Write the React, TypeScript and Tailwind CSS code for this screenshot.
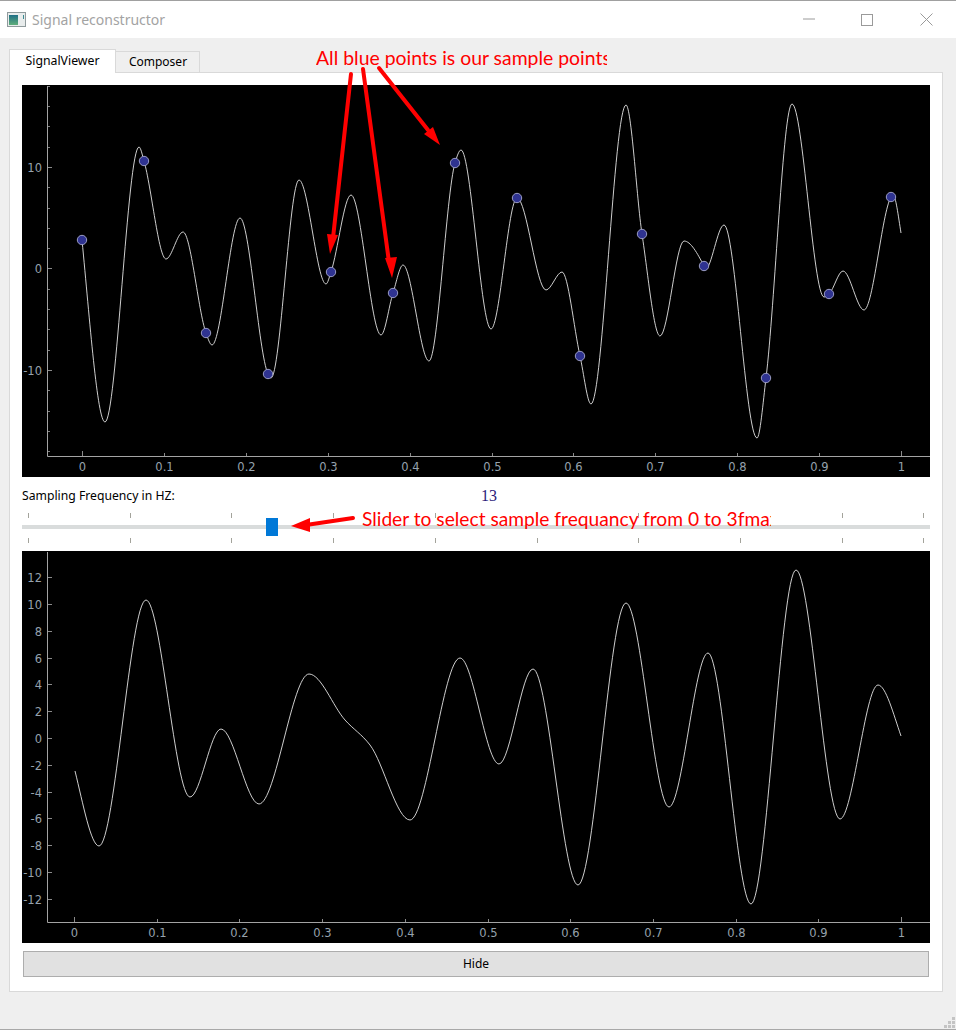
import React from 'react';

type Pt = [number, number];

// knots are page pixels: extrema and the sample dots
const topKnots: Pt[] = [
  [82, 240], [105, 422], [139, 147], [144, 161], [166, 259], [183, 232], [206, 333], [212, 345], [240, 218],
  [268, 374], [271, 378], [299, 180], [326, 284], [331, 272], [351, 195], [381, 335], [393, 293], [403, 265], [429, 361],
  [455, 163], [461, 150], [491, 329], [517, 198], [546, 290], [562, 272], [580, 356], [591, 404], [626, 105], [642, 234],
  [660, 336], [684, 241], [704, 266], [705, 270], [724, 225], [757, 438], [766, 378], [792, 104], [824, 297], [829, 294], [843, 271],
  [864, 310], [891, 197], [893, 195], [901, 233],
];

const bottomKnots: Pt[] = [
  [75, 771], [99, 846], [146, 600], [190, 797], [221, 729], [259, 804], [309, 674], [345, 720], [370, 745], [410, 820],
  [460, 658], [499, 764], [533, 669], [578, 885], [626, 603], [669, 807], [708, 653], [751, 904], [796, 570], [840, 819],
  [878, 685], [901, 736],
];

const samples: Pt[] = [
  [82, 240], [144, 161], [206, 333], [268, 374], [331, 272], [393, 293], [455, 163], [517, 198], [580, 356], [642, 234],
  [704, 266], [766, 378], [829, 294], [891, 197],
];

function curvePath(pts: Pt[]) {
  const slope = pts.map((p, i) => {
    if (i === 0 || i === pts.length - 1) {
      const a = pts[i === 0 ? 0 : i - 1];
      const b = pts[i === 0 ? 1 : i];
      return ((b[1] - a[1]) / (b[0] - a[0])) * 1.3;
    }
    const d0 = (p[1] - pts[i - 1][1]) / (p[0] - pts[i - 1][0]);
    const d1 = (pts[i + 1][1] - p[1]) / (pts[i + 1][0] - p[0]);
    if (d0 * d1 <= 0) return 0;
    return (2 * d0 * d1) / (d0 + d1);
  });
  let d = `M${pts[0][0]} ${pts[0][1]}`;
  for (let i = 1; i < pts.length; i++) {
    const [x0, y0] = pts[i - 1];
    const [x1, y1] = pts[i];
    const h = (x1 - x0) / 3;
    d += `C${x0 + h} ${y0 + slope[i - 1] * h} ${x1 - h} ${y1 - slope[i] * h} ${x1} ${y1}`;
  }
  return d;
}

const axisFont = { fontFamily: '"DejaVu Sans", sans-serif' };

function Plot({
  top,
  axisY,
  x0,
  xStep,
  yTicks,
  minorYs,
  knots,
  dots,
}: {
  top: number;
  axisY: number;
  x0: number;
  xStep: number;
  yTicks: { y: number; label: string }[];
  minorYs: number[];
  knots: Pt[];
  dots?: Pt[];
}) {
  const xLabels = ['0', '0.1', '0.2', '0.3', '0.4', '0.5', '0.6', '0.7', '0.8', '0.9', '1'];
  return (
    <svg viewBox={`22 ${top} 908 392`} className="block h-[392px] w-[908px] bg-black">
      <path d={`M47.5 ${top + 1}V${axisY + 0.5}H930`} stroke="#a3a3a3" fill="none" />
      {minorYs.map((y) => (
        <path key={y} d={`M48 ${y + 0.5}h2`} stroke="#7d7d7d" />
      ))}
      {yTicks.map((t) => (
        <g key={t.label}>
          <path d={`M48 ${t.y + 0.5}h4`} stroke="#8a8a8a" />
          <text x={42} y={t.y + 4.5} textAnchor="end" fontSize={11.5} fill="#96a2ad" style={axisFont}>
            {t.label}
          </text>
        </g>
      ))}
      {xLabels.map((label, i) => {
        const x = Math.round(x0 + xStep * i) + 0.5;
        const major = i === 0 || i === 10;
        return (
          <g key={label}>
            <path d={`M${x} ${axisY}v${major ? -5 : -3}`} stroke="#8a8a8a" />
            <text x={x} y={axisY + 15} textAnchor="middle" fontSize={11.5} fill="#96a2ad" style={axisFont}>
              {label}
            </text>
          </g>
        );
      })}
      <path d={curvePath(knots)} fill="none" stroke="#e4e4e4" strokeWidth={0.9} />
      {dots?.map(([x, y]) => (
        <circle key={x} cx={x} cy={y} r={4.7} fill="#2f3391" stroke="#9a9cc4" strokeWidth={1} />
      ))}
    </svg>
  );
}

function Arrow({ d, head }: { d: string; head: string }) {
  return (
    <>
      <path d={d} fill="none" stroke="#ff0000" strokeWidth={4} strokeLinecap="round" />
      <polygon points={head} fill="#ff0000" />
    </>
  );
}

const sliderTicks = [28, 130, 231, 333, 435, 537, 638, 740, 842, 923];

function SliderTicks() {
  return (
    <div className="relative h-[5px] w-full">
      {sliderTicks.map((x) => (
        <div key={x} className="absolute top-0 h-[5px] w-px bg-[#a3a39b]" style={{ left: x - 22 }} />
      ))}
    </div>
  );
}

const topMinor = [-4, -3, -2, -1, 1, 2, 3, 4, 6, 7, 8, 9, 11, 12, 13, 14].map((n) => Math.round(167 + n * 20.3));

export default function App() {
  return (
    <div
      className="relative flex h-[1030px] w-[956px] flex-col overflow-hidden border-t border-b border-t-[#a0a0a0] border-b-[#a8a8a8] bg-[#efefef] text-[12px] text-black"
      style={{ fontFamily: '"Noto Sans", sans-serif' }}
    >
      {/* title bar */}
      <div className="flex h-[37px] shrink-0 items-center bg-white pl-[7px]">
        <svg width="20" height="16" viewBox="0 0 20 16" className="mr-[5px]">
          <defs>
            <linearGradient id="ico" x1="0" y1="0" x2="0" y2="1">
              <stop offset="0" stopColor="#1f6f86" />
              <stop offset="1" stopColor="#5fae7a" />
            </linearGradient>
          </defs>
          <rect x="0.5" y="0.5" width="18" height="14" fill="#e8ecec" stroke="#8f9a9c" />
          <rect x="2" y="3" width="9" height="10" fill="url(#ico)" />
          <rect x="16" y="3" width="1" height="4" fill="#3b8a90" />
        </svg>
        <span className="text-[14px] text-[#a3a3a3]">Signal reconstructor</span>
        <div className="ml-auto flex items-center pr-[23px]">
          <svg width="12" height="2" viewBox="0 0 12 2" className="mb-[2px] mr-[46px]">
            <path d="M0 1h12" stroke="#9a9a9a" />
          </svg>
          <svg width="12" height="12" viewBox="0 0 12 12" className="mr-[47px]">
            <rect x="0.5" y="0.5" width="11" height="11" fill="none" stroke="#9a9a9a" />
          </svg>
          <svg width="13" height="13" viewBox="0 0 13 13">
            <path d="M0.5 0.5l12 12M12.5 0.5l-12 12" stroke="#9a9a9a" />
          </svg>
        </div>
      </div>

      {/* tabs */}
      <div className="relative z-10 ml-[9px] mt-[11px] flex h-[23px] shrink-0 items-end">
        <div className="-mb-px flex h-[24px] w-[107px] items-center justify-center border border-b-0 border-[#d9d9d9] bg-white text-[12.3px]">
          SignalViewer
        </div>
        <div className="flex h-[21px] w-[84px] items-center justify-center border border-b-0 border-l-0 border-[#d9d9d9] bg-[#efefef] pl-[1px]">
          Composer
        </div>
      </div>

      {/* tab page */}
      <div className="ml-[9px] flex h-[920px] w-[934px] shrink-0 flex-col border border-[#d9d9d9] bg-white px-[12px] pt-[12px]">
        <Plot
          top={85}
          axisY={456}
          x0={82}
          xStep={81.9}
          yTicks={[
            { y: 167, label: '10' },
            { y: 268, label: '0' },
            { y: 370, label: '-10' },
          ]}
          minorYs={topMinor}
          knots={topKnots}
          dots={samples}
        />
        <div className="relative mt-[11px] flex h-[16px] items-center">
          <span className="text-[12.2px]">Sampling Frequency in HZ:</span>
          <span
            className="absolute left-[459px] top-[-4px] text-[16px] text-[#2b1a7a]"
            style={{ fontFamily: '"Liberation Serif", serif' }}
          >
            13
          </span>
        </div>
        <div className="mt-[9px]">
          <SliderTicks />
          <div className="relative mt-[7px] h-[4px] w-full bg-[#d9dcdc]">
            <div className="absolute left-[244px] top-[-7px] h-[18px] w-[12px] bg-[#0078d7]" />
          </div>
          <div className="mt-[9px]">
            <SliderTicks />
          </div>
        </div>
        <div className="mt-[8px]">
          <Plot
            top={551}
            axisY={922}
            x0={74}
            xStep={82.7}
            yTicks={[12, 10, 8, 6, 4, 2, 0, -2, -4, -6, -8, -10, -12].map((n) => ({ y: Math.round(738 - n * 13.38), label: String(n) }))}
            minorYs={[]}
            knots={bottomKnots}
          />
        </div>
        <button className="ml-px mt-[8px] h-[26px] w-[906px] border border-[#adadad] bg-[#e1e1e1] text-[12px]">Hide</button>
      </div>

      {/* annotations drawn on top of the screenshot */}
      <div
        className="absolute left-[316px] top-[46px] w-[291px] overflow-hidden whitespace-nowrap text-[19.4px] leading-[22px] text-[#ff0000]"
        style={{ fontFamily: 'Lato, sans-serif' }}
      >
        All blue points is our sample points
      </div>
      <div
        className="absolute left-[362px] top-[507px] w-[409px] overflow-hidden whitespace-nowrap text-[19.2px] leading-[22px] text-[#ff0000]"
        style={{ fontFamily: 'Lato, sans-serif' }}
      >
        Slider to select sample frequancy from 0 to 3fmax
      </div>
      <svg className="pointer-events-none absolute left-0 top-[-1px]" width="956" height="1030" viewBox="0 0 956 1030">
        <Arrow d="M351 74L333 238" head="327,234 338,235 330,254" />
        <Arrow d="M363 69L389 262" head="385,258 397,257 392,278" />
        <Arrow d="M379 68L428 130" head="424,134 433,127 440,145" />
        <Arrow d="M353 518L306 525" head="291,526 310,518 310,532" />
      </svg>

      {/* resize grip */}
      <svg className="absolute bottom-0 right-0" width="14" height="14" viewBox="0 0 14 14">
        <path d="M10 2h3v3h-3zM6 6h3v3H6zM10 6h3v3h-3zM2 10h3v3H2zM6 10h3v3H6zM10 10h3v3h-3z" fill="#c4c4c4" />
      </svg>
    </div>
  );
}
